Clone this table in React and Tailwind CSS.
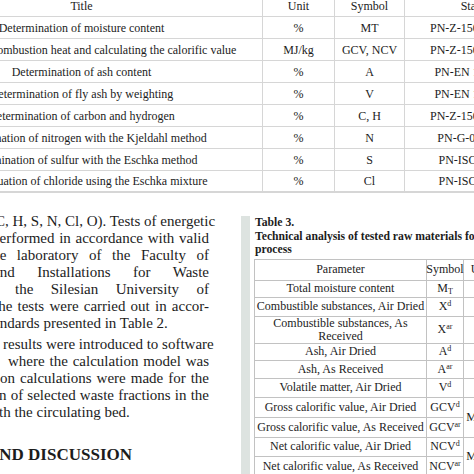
const topRows = [
  { title: "Determination of moisture content", unit: "%", symbol: "MT", std: "PN-Z-15008-02:1993", cls: "" },
  { title: "Determination of combustion heat and calculating the calorific value", unit: "MJ/kg", symbol: "GCV, NCV", std: "PN-Z-15008-04:1993", cls: "pr-[20px]" },
  { title: "Determination of ash content", unit: "%", symbol: "A", std: "PN-EN 15403:2011", cls: "" },
  { title: "Determination of fly ash by weighting", unit: "%", symbol: "V", std: "PN-EN 15402:2011", cls: "" },
  { title: "Determination of carbon and hydrogen", unit: "%", symbol: "C, H", std: "PN-Z-15008-03:1993", cls: "" },
  { title: "Determination of nitrogen with the Kjeldahl method", unit: "%", symbol: "N", std: "PN-G-04523:1992", cls: "" },
  { title: "Determination of sulfur with the Eschka method", unit: "%", symbol: "S", std: "PN-ISO 334:1997", cls: "" },
  { title: "Evaluation of chloride using the Eschka mixture", unit: "%", symbol: "Cl", std: "PN-ISO 587:2000", cls: "pl-[20px]" },
];

const bodyLines = [
  { text: "(C, H, S, N, Cl, O). Tests of energetic", cls: "-ml-[10px] w-[219px]", justify: true },
  { text: "performed in accordance with valid", cls: "-ml-[8px] w-[217px]", justify: true },
  { text: "the laboratory of the Faculty of", cls: "-ml-[12px] w-[221px]", justify: true },
  { text: "and Installations for Waste", cls: "-ml-[7px] w-[216px]", justify: true },
  { text: "the Silesian University of", cls: "ml-[15px] w-[194px]", justify: true },
  { text: "The tests were carried out in accor-", cls: "-ml-[11px] w-[220px]", justify: true },
  { text: "standards presented in Table 2.", cls: "-ml-[17px] w-[240px]", justify: false },
  { text: "results were introduced to software", cls: "mt-[4px] ml-[3px] w-[206px]", justify: true },
  { text: "where the calculation model was", cls: "ml-[8px] w-[201px]", justify: true },
  { text: "on calculations were made for the", cls: "ml-0 w-[209px]", justify: true },
  { text: "n of selected waste fractions in the", cls: "-ml-[1px] w-[210px]", justify: true },
  { text: "with the circulating bed.", cls: "-ml-[16px] w-[240px]", justify: false },
];

const cell = "border-r border-b border-[#c2c2c2] flex items-center justify-center text-center";

const Sym = ({ base, sup, sub }) => (
  <span>
    {base}
    {sup && <sup className="text-[8px]">{sup}</sup>}
    {sub && <sub className="text-[8px]">{sub}</sub>}
  </span>
);

const table3 = [
  { p: "Total moisture content", s: <Sym base="M" sub="T" />, u: "%" },
  { p: "Combustible substances, Air Dried", s: <Sym base="X" sup="d" />, u: "%" },
  { p: "Combustible substances, As Received", s: <Sym base="X" sup="ar" />, u: "%" },
  { p: "Ash, Air Dried", s: <Sym base="A" sup="d" />, u: "%" },
  { p: "Ash, As Received", s: <Sym base="A" sup="ar" />, u: "%" },
  { p: "Volatile matter, Air Dried", s: <Sym base="V" sup="d" />, u: "%" },
  { p: "Gross calorific value, Air Dried", s: <Sym base="GCV" sup="d" />, u: "MJ/kg", span: true },
  { p: "Gross calorific value, As Received", s: <Sym base="GCV" sup="ar" /> },
  { p: "Net calorific value, Air Dried", s: <Sym base="NCV" sup="d" />, u: "MJ/kg", span: true },
  { p: "Net calorific value, As Received", s: <Sym base="NCV" sup="ar" /> },
  { p: "Carbon, Air Dried", s: <Sym base="C" sup="d" />, u: "%" },
];

export default function App() {
  return (
    <div className="w-[474px] h-[474px] overflow-hidden bg-white text-[#1c1c1c] font-['Liberation_Serif','Times_New_Roman',serif]">
      {/* Table 2 */}
      <div className="-ml-[99px] -mt-[5px] w-[658px] text-[12px]">
        <div className="flex h-[22px] border-b border-[#d6d6d6]">
          <div className="w-[362px] border-r border-[#d6d6d6] flex items-center justify-center">Title</div>
          <div className="w-[72px] border-r border-[#d6d6d6] flex items-center justify-center">Unit</div>
          <div className="w-[70px] border-r border-[#d6d6d6] flex items-center justify-center">Symbol</div>
          <div className="w-[154px] flex items-center justify-center">Standard</div>
        </div>
        {topRows.map((r, i) => (
          <div
            key={i}
            className={`flex h-[22px] border-[#d6d6d6] ${i === topRows.length - 1 ? "border-b-2" : "border-b"}`}
          >
            <div className={`w-[362px] border-r border-[#d6d6d6] flex items-center justify-center whitespace-nowrap ${r.cls}`}>
              {r.title}
            </div>
            <div className="w-[72px] border-r border-[#d6d6d6] flex items-center justify-center">{r.unit}</div>
            <div className="w-[70px] border-r border-[#d6d6d6] flex items-center justify-center">{r.symbol}</div>
            <div className="w-[154px] flex items-center justify-center whitespace-nowrap">{r.std}</div>
          </div>
        ))}
      </div>

      <div className="flex h-[282px]">
        {/* body text column */}
        <div className="w-[209px] shrink-0 pt-[20px] text-[15px] leading-[17px]">
          {bodyLines.map((l, i) => (
            <div
              key={i}
              className={`h-[17px] whitespace-nowrap ${l.cls} ${l.justify ? "text-justify [text-align-last:justify] whitespace-normal" : ""}`}
            >
              {l.text}
            </div>
          ))}
          <div className="mt-[23px] -ml-[13px] whitespace-nowrap text-[17px] leading-[22px] font-bold">
            AND DISCUSSION
          </div>
        </div>

        {/* Table 3 column */}
        <div className="ml-[32px] mt-[23px] flex shrink-0">
          <div className="w-[9px] bg-[#dde3e0]" />
          <div className="pl-[4px]">
            <div className="pl-[1px] text-[11.7px] leading-[13.5px] font-bold whitespace-nowrap">
              <div>Table 3.</div>
              <div>Technical analysis of tested raw materials for the combustion</div>
              <div>process</div>
            </div>
            <div className="mt-[2px] grid grid-cols-[172px_37px_36px] grid-rows-[21px_17px_19px_27px_17px_18px_19px_20px_20px_19px_20px_20px] border-l border-t border-[#c2c2c2] text-[12px] leading-[13px]">
              <div className={cell}>Parameter</div>
              <div className={cell}>Symbol</div>
              <div className={cell}>Unit</div>
              {table3.map((r, i) => [
                <div key={`p${i}`} className={cell}>{r.p}</div>,
                <div key={`s${i}`} className={`${cell} whitespace-nowrap`}>{r.s}</div>,
                r.u ? (
                  <div key={`u${i}`} className={`${cell} whitespace-nowrap ${r.span ? "row-span-2" : ""}`}>
                    {r.u}
                  </div>
                ) : null,
              ])}
            </div>
          </div>
        </div>
      </div>
    </div>
  );
}
